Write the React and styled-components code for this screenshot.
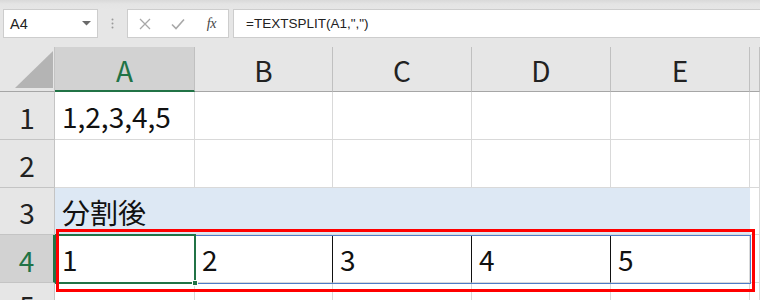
import React from "react";
import styled, { createGlobalStyle } from "styled-components";

const GlobalStyle = createGlobalStyle`
  html, body { margin: 0; padding: 0; background: #ffffff; overflow: hidden; }
  * { box-sizing: border-box; }
`;

const GREEN = "#217346";
const GRID = "#d9d9d9";
const CELL_FONT = `"Noto Sans CJK JP", "Noto Sans", sans-serif`;

const Frame = styled.div`
  width: 760px;
  height: 300px;
  overflow: hidden;
  display: flex;
  flex-direction: column;
  background: #ffffff;
`;

const TopBar = styled.div`
  height: 47px;
  flex: none;
  display: flex;
  align-items: flex-start;
  padding: 9px 0 0 3px;
  background: linear-gradient(#d9d9d9 0px, #e4e4e4 4px, #e6e6e6 9px);
`;

const NameBox = styled.div`
  width: 95px;
  height: 29px;
  background: #ffffff;
  border: 1px solid #cdcdcd;
  display: flex;
  align-items: center;
  justify-content: space-between;
  padding: 0 6px 0 6px;
  font-family: "Liberation Sans", Arial, sans-serif;
  font-size: 14.5px;
  color: #222;
`;

const Dots = styled.div`
  width: 29px;
  height: 29px;
  display: flex;
  align-items: center;
  justify-content: center;
`;

const ButtonBox = styled.div`
  width: 102px;
  height: 29px;
  background: #ffffff;
  border: 1px solid #cdcdcd;
  display: flex;
  align-items: center;
`;

const IconSlot = styled.span`
  width: 34px;
  height: 27px;
  display: flex;
  align-items: center;
  justify-content: center;
`;

const Fx = styled.span`
  font-family: "Liberation Serif", "Times New Roman", serif;
  font-style: italic;
  font-size: 14px;
  color: #444;
  letter-spacing: -0.5px;
`;

const FormulaInput = styled.div`
  flex: 1;
  height: 29px;
  margin-left: 4px;
  background: #ffffff;
  border: 1px solid #cdcdcd;
  border-right: none;
  display: flex;
  align-items: center;
  padding-left: 12px;
  font-family: "Liberation Sans", Arial, sans-serif;
  font-size: 13.5px;
  color: #222;
`;

const Sheet = styled.div`
  position: relative;
  flex: 1;
  display: grid;
  grid-template-columns: 55px 140px 138px 139px 139px 139px 1fr;
  grid-template-rows: 45px 48px 48px 47px 48px 1fr;
  background: #ffffff;
`;

const Corner = styled.div`
  background: #e6e6e6;
  border-right: 1px solid #c4c4c4;
  border-bottom: 1px solid #a6a6a6;
  position: relative;
`;

const ColHeader = styled.div`
  background: ${(p) => (p.$selected ? "#d2d2d2" : "#e6e6e6")};
  border-right: 1px solid #c0c0c0;
  border-bottom: ${(p) => (p.$selected ? `2px solid ${GREEN}` : "1px solid #a6a6a6")};
  display: flex;
  align-items: center;
  justify-content: center;
  padding-top: ${(p) => (p.$selected ? "3px" : "2px")};
  font-family: ${CELL_FONT};
  font-size: 28px;
  color: ${(p) => (p.$selected ? GREEN : "#222")};
`;

const RowHeader = styled.div`
  background: ${(p) => (p.$selected ? "#d2d2d2" : "#e6e6e6")};
  border-right: ${(p) => (p.$selected ? `2px solid ${GREEN}` : "1px solid #c4c4c4")};
  border-bottom: 1px solid #c4c4c4;
  display: flex;
  align-items: center;
  justify-content: center;
  padding-top: 2px;
  font-family: ${CELL_FONT};
  font-size: 28px;
  color: ${(p) => (p.$selected ? GREEN : "#222")};
`;

const Cell = styled.div`
  background: ${(p) => p.$fill || "#ffffff"};
  border-right: 1px solid ${(p) => p.$rightColor || p.$fill || GRID};
  border-bottom: 1px solid ${GRID};
  display: flex;
  align-items: center;
  padding: 1px 0 0 7px;
  font-family: ${CELL_FONT};
  font-size: 28px;
  color: #111;
  white-space: nowrap;
  overflow: hidden;
`;

const SpillOutline = styled.div`
  position: absolute;
  left: 55px;
  top: 188px;
  width: 696px;
  height: 49px;
  border: 1px solid #4f7cc8;
  pointer-events: none;
`;

const Selection = styled.div`
  position: absolute;
  left: 55px;
  top: 187px;
  width: 141px;
  height: 50px;
  border: 2px solid ${GREEN};
  pointer-events: none;
`;

const FillHandle = styled.div`
  position: absolute;
  right: -4px;
  bottom: -4px;
  width: 6px;
  height: 6px;
  background: ${GREEN};
  border: 1px solid #ffffff;
`;

const Highlight = styled.div`
  position: absolute;
  left: 56px;
  top: 182px;
  width: 699px;
  height: 63px;
  border: 3px solid #ff0000;
  pointer-events: none;
`;

const cols = ["A", "B", "C", "D", "E", ""];

export default function App() {
  const rows = [
    { n: "1", cells: ["1,2,3,4,5", "", "", "", "", ""] },
    { n: "2", cells: ["", "", "", "", "", ""] },
    { n: "3", cells: ["分割後", "", "", "", "", ""], fill: "#dde8f4" },
    { n: "4", cells: ["1", "2", "3", "4", "5", ""], selected: true },
    { n: "5", cells: ["", "", "", "", "", ""] },
  ];

  return (
    <Frame>
      <GlobalStyle />
      <TopBar>
        <NameBox>
          <span>A4</span>
          <svg width="9" height="5" viewBox="0 0 9 5">
            <path d="M0 0 L9 0 L4.5 4.5 Z" fill="#6a6a6a" />
          </svg>
        </NameBox>
        <Dots>
          <svg width="3" height="11" viewBox="0 0 3 11">
            <circle cx="1.5" cy="1.5" r="1" fill="#9a9a9a" />
            <circle cx="1.5" cy="5.5" r="1" fill="#9a9a9a" />
            <circle cx="1.5" cy="9.5" r="1" fill="#9a9a9a" />
          </svg>
        </Dots>
        <ButtonBox>
          <IconSlot>
            <svg width="12" height="12" viewBox="0 0 12 12">
              <path d="M1 1 L11 11 M11 1 L1 11" stroke="#a8a8a8" strokeWidth="1.3" fill="none" />
            </svg>
          </IconSlot>
          <IconSlot>
            <svg width="14" height="12" viewBox="0 0 14 12">
              <path d="M1 6.5 L5 10.5 L13 1.5" stroke="#a8a8a8" strokeWidth="1.6" fill="none" />
            </svg>
          </IconSlot>
          <IconSlot>
            <Fx>fx</Fx>
          </IconSlot>
        </ButtonBox>
        <FormulaInput>=TEXTSPLIT(A1,",")</FormulaInput>
      </TopBar>
      <Sheet>
        <Corner>
          <svg width="55" height="45" viewBox="0 0 55 45" style={{ position: "absolute", left: 0, top: 0 }}>
            <path d="M15 41 L53 4 L53 41 Z" fill="#b4b4b4" />
          </svg>
        </Corner>
        {cols.map((c, i) => (
          <ColHeader key={"h" + i} $selected={c === "A"}>
            {c}
          </ColHeader>
        ))}
        {rows.map((r) => (
          <React.Fragment key={r.n}>
            <RowHeader $selected={r.selected}>{r.n}</RowHeader>
            {r.cells.map((v, i) => (
              <Cell
                key={r.n + i}
                $fill={r.fill && i < 5 ? r.fill : undefined}
                $rightColor={r.selected && i < 4 ? "#111" : undefined}
              >
                {v}
              </Cell>
            ))}
          </React.Fragment>
        ))}
        <SpillOutline />
        <Selection>
          <FillHandle />
        </Selection>
        <Highlight />
      </Sheet>
    </Frame>
  );
}
